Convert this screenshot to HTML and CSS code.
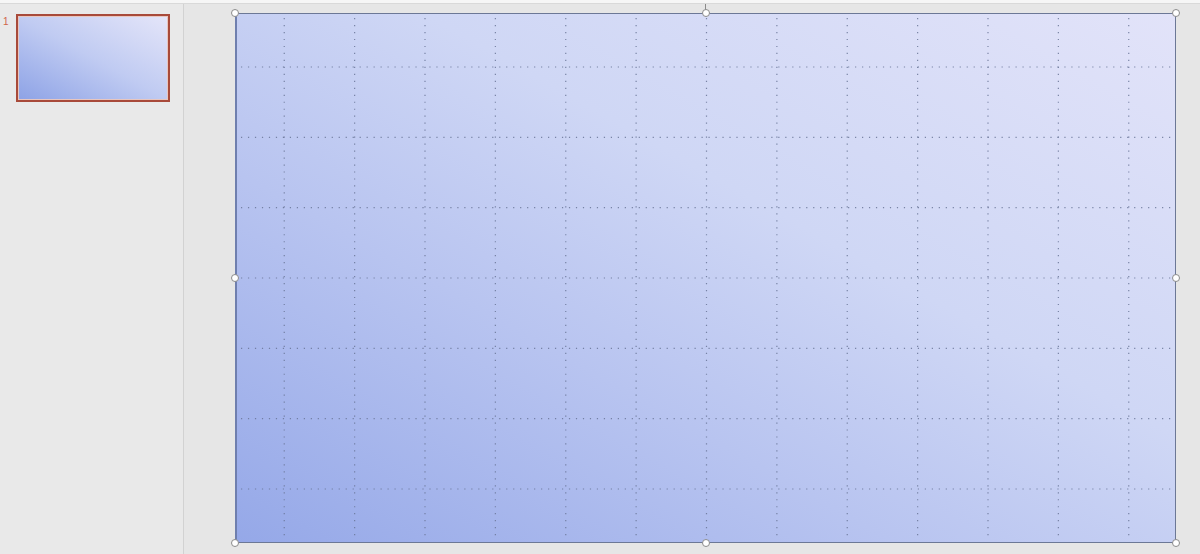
FILE: index.html
```html
<!DOCTYPE html>
<html>
<head>
<meta charset="utf-8">
<link rel="stylesheet" href="styles.css">
</head>
<body>
<div class="app">
  <div class="ruler-strip"></div>
  <div class="main">
    <aside class="sidebar">
      <div class="thumb-row">
        <span class="slide-num">1</span>
        <div class="thumb"><div class="thumb-inner"></div></div>
      </div>
    </aside>
    <section class="stage">
      <div class="slide-wrap">
        <div class="slide">
          <svg class="grid" viewBox="0 0 941 530" preserveAspectRatio="none">
            <g class="gl">
              <line x1="47.4" y1="4" x2="47.4" y2="526"/>
              <line x1="118" y1="4" x2="118" y2="526"/>
              <line x1="188.6" y1="4" x2="188.6" y2="526"/>
              <line x1="259.2" y1="4" x2="259.2" y2="526"/>
              <line x1="329.8" y1="4" x2="329.8" y2="526"/>
              <line x1="400.4" y1="4" x2="400.4" y2="526"/>
              <line x1="471" y1="4" x2="471" y2="526"/>
              <line x1="541.6" y1="4" x2="541.6" y2="526"/>
              <line x1="612.2" y1="4" x2="612.2" y2="526"/>
              <line x1="682.8" y1="4" x2="682.8" y2="526"/>
              <line x1="753.4" y1="4" x2="753.4" y2="526"/>
              <line x1="824" y1="4" x2="824" y2="526"/>
              <line x1="894.6" y1="4" x2="894.6" y2="526"/>
              <line x1="4" y1="53.2" x2="937" y2="53.2"/>
              <line x1="4" y1="123.8" x2="937" y2="123.8"/>
              <line x1="4" y1="194.4" x2="937" y2="194.4"/>
              <line x1="4" y1="265" x2="937" y2="265"/>
              <line x1="4" y1="335.6" x2="937" y2="335.6"/>
              <line x1="4" y1="406.2" x2="937" y2="406.2"/>
              <line x1="4" y1="476.8" x2="937" y2="476.8"/>
            </g>
          </svg>
        </div>
        <div class="rot-line"></div>
        <span class="h h-tl"></span>
        <span class="h h-tm"></span>
        <span class="h h-tr"></span>
        <span class="h h-ml"></span>
        <span class="h h-mr"></span>
        <span class="h h-bl"></span>
        <span class="h h-bm"></span>
        <span class="h h-br"></span>
      </div>
    </section>
  </div>
</div>
</body>
</html>
```

FILE: styles.css
```css
html, body {
  margin: 0;
  padding: 0;
  width: 1200px;
  height: 554px;
  overflow: hidden;
  background: #e7e7e7;
  font-family: "Liberation Sans", Arial, sans-serif;
}

.app {
  display: flex;
  flex-direction: column;
  height: 554px;
}

.ruler-strip {
  height: 3px;
  background: #f6f6f6;
  border-bottom: 1px solid #d9d9d9;
  flex: none;
}

.main {
  display: flex;
  flex: 1;
}

.sidebar {
  width: 184px;
  flex: none;
  background: #e9e9e9;
  border-right: 1px solid #d2d2d2;
  padding-top: 10px;
  box-sizing: border-box;
}

.thumb-row {
  display: flex;
  align-items: flex-start;
}

.slide-num {
  width: 16px;
  padding-left: 3px;
  box-sizing: border-box;
  font-size: 10px;
  line-height: 10px;
  margin-top: 3px;
  color: #d0654a;
}

.thumb {
  width: 154px;
  height: 88px;
  box-sizing: border-box;
  border: 2px solid #a84a3a;
  padding: 1px;
  background: #e8c6bf;
}

.thumb-inner {
  width: 100%;
  height: 100%;
  background: linear-gradient(to top right, #8ea3e6 0%, #c0cbf2 50%, #e4e5f9 100%);
}

.stage {
  flex: 1;
  padding-left: 51px;
  padding-top: 9px;
  background: #e6e6e6;
}

.slide-wrap {
  position: relative;
  width: 941px;
  height: 530px;
}

.slide {
  width: 941px;
  height: 530px;
  box-sizing: border-box;
  border: 1px solid #6c7896;
  border-left: 2px solid #6f7fae;
  background: linear-gradient(to top right, #95a8e8 0%, #b8c4f0 35%, #cfd7f5 60%, #e2e3f9 100%);
}

.grid {
  display: block;
  width: 100%;
  height: 100%;
}

.gl line {
  stroke: #6a7698;
  stroke-width: 1.2;
  stroke-dasharray: 1.2 5.8;
  opacity: 0.85;
}

.rot-line {
  position: absolute;
  left: 470px;
  top: -9px;
  width: 1px;
  height: 9px;
  background: #8a8a8a;
}

.h {
  position: absolute;
  width: 6px;
  height: 6px;
  border-radius: 50%;
  background: #ffffff;
  border: 1px solid #8b8b8b;
  margin-left: -4px;
  margin-top: -4px;
}

.h-tl { left: 0; top: 0; }
.h-tm { left: 471px; top: 0; }
.h-tr { left: 941px; top: 0; }
.h-ml { left: 0; top: 265px; }
.h-mr { left: 941px; top: 265px; }
.h-bl { left: 0; top: 530px; }
.h-bm { left: 471px; top: 530px; }
.h-br { left: 941px; top: 530px; }
```
